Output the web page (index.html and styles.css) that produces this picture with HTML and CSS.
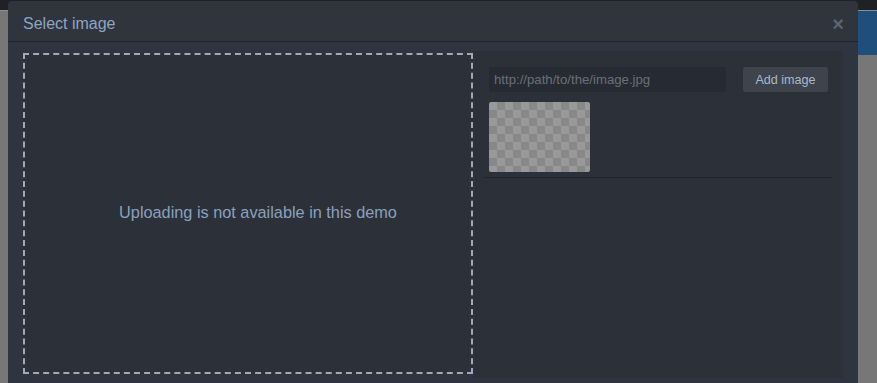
FILE: index.html
```html
<!DOCTYPE html>
<html>
<head>
    <title>Select image</title>
    <link rel="stylesheet" href="styles.css">
</head>
<body>
    <div class="page-bar"></div>
    <div class="page-side"></div>

    <div class="modal">
        <div class="modal-header">
            <div class="modal-title">Select image</div>
            <span class="modal-close">&times;</span>
        </div>
        <div class="modal-body">
            <div class="dropzone">
                <div class="dropzone-text">Uploading is not available in this demo</div>
            </div>
            <div class="assets">
                <div class="add-row">
                    <input class="add-input" type="text" placeholder="http://path/to/the/image.jpg">
                    <button class="add-button">Add image</button>
                </div>
                <div class="asset-list">
                    <div class="asset-thumb"></div>
                </div>
            </div>
        </div>
    </div>
</body>
</html>
```

FILE: styles.css
```css
body {
    margin: 0;
    padding: 0;
    background-color: #767776;
    font-family: "Liberation Sans", Arial, sans-serif;
    height: 383px;
    overflow: hidden;
}
.page-bar {
    height: 10px;
    background-color: #1f2124;
    border-bottom: 1px solid #8a8f96;
}
.page-side {
    width: 19px;
    height: 44px;
    margin-left: 858px;
    background-color: #1f4e7c;
}
.modal {
    position: absolute;
    left: 8px;
    top: 1px;
    width: 850px;
    height: 382px;
    overflow: hidden;
    background-color: #2e3440;
    border-radius: 4px 4px 0 0;
    box-sizing: border-box;
}
.modal-header {
    height: 40px;
    border-bottom: 1px solid #1f232a;
    display: flex;
    align-items: center;
    justify-content: space-between;
    padding: 0 14px 0 15px;
    background-color: #2f343d;
    border-radius: 4px 4px 0 0;
}
.modal-title {
    font-size: 16px;
    color: #8ea5c3;
    padding-top: 6px;
}
.modal-close {
    font-size: 20px;
    font-weight: bold;
    color: #5d6370;
    padding-top: 7px;
}
.modal-body {
    display: flex;
    align-items: flex-start;
    padding: 0 15px;
}
.dropzone {
    width: 450px;
    height: 321px;
    margin-top: 11px;
    box-sizing: border-box;
    border: 2px dashed #a1a9b9;
    background-color: #2c3039;
    display: flex;
    justify-content: center;
    align-items: center;
    padding-left: 20px;
}
.dropzone-text {
    font-size: 16.3px;
    color: #8ba0bd;
    padding-bottom: 2px;
}
.assets {
    width: 370px;
    height: 327px;
    margin-top: 9px;
    background-color: #2c3039;
    border-radius: 0 3px 3px 0;
    padding: 16px 10px 0 11px;
    box-sizing: border-box;
}
.add-row {
    display: flex;
    justify-content: space-between;
    padding: 0 5px;
}
.add-input {
    width: 237px;
    height: 25px;
    box-sizing: border-box;
    border: none;
    outline: none;
    border-radius: 2px;
    background-color: #262a32;
    padding: 0 5px;
    font-family: "Liberation Sans", Arial, sans-serif;
    font-size: 13.2px;
    color: #a9b5c8;
}
.add-input::placeholder {
    color: #6a7079;
}
.add-button {
    width: 85px;
    height: 25px;
    border: none;
    border-radius: 2px;
    background-color: #3e434c;
    font-family: "Liberation Sans", Arial, sans-serif;
    font-size: 12.6px;
    color: #a9b8cc;
    cursor: pointer;
}
.asset-list {
    padding: 10px 5px 5px;
    border-bottom: 1px solid #22252b;
}
.asset-thumb {
    width: 101px;
    height: 70px;
    border-radius: 2px;
    background-color: #999999;
    background-image:
        linear-gradient(45deg, #888888 25%, transparent 25%, transparent 75%, #888888 75%),
        linear-gradient(45deg, #888888 25%, transparent 25%, transparent 75%, #888888 75%);
    background-size: 16px 16px;
    background-position: 0 0, 8px 8px;
}
```
